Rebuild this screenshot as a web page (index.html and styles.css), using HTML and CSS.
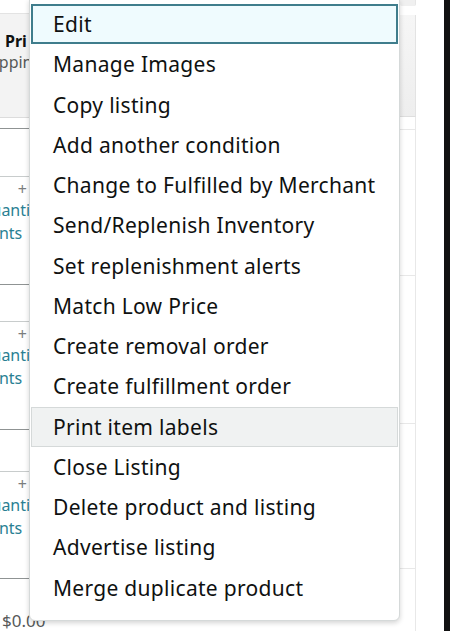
FILE: index.html
```html
<!DOCTYPE html>
<html lang="en">
<head>
<meta charset="utf-8">
<title>Listing actions</title>
<link rel="stylesheet" href="styles.css">
</head>
<body>
<div class="page">
  <div class="grid">
    <div class="col-main">
      <div class="top-gap"></div>
      <div class="head-cell">
        <div class="head-title">Pri</div>
        <div class="head-sub">Shipping</div>
      </div>
      <div class="gap-a"></div>
      <div class="field f1"></div>
      <div class="links l1">
        <div class="plus">+</div>
        <div class="link-a">Quanti</div>
        <div class="link-b">discounts</div>
      </div>
      <div class="field f2"></div>
      <div class="links l2">
        <div class="plus">+</div>
        <div class="link-a">Quanti</div>
        <div class="link-b">discounts</div>
      </div>
      <div class="field f3"></div>
      <div class="links l3">
        <div class="plus">+</div>
        <div class="link-a">Quanti</div>
        <div class="link-b">discounts</div>
      </div>
      <div class="field f4">
        <div class="price">$0.00</div>
      </div>
    </div>
    <div class="col-under"></div>
    <div class="col-side">
      <div class="side-stub"></div>
      <div class="side-head"></div>
      <div class="side-row r0"></div>
      <div class="side-row r1"></div>
      <div class="side-row r2"></div>
      <div class="side-row r3"></div>
      <div class="side-row r4"></div>
    </div>
    <div class="col-gutter"></div>
    <div class="scrollbar"></div>
  </div>

  <ul class="menu">
    <li class="item focused">Edit</li>
    <li class="item">Manage Images</li>
    <li class="item">Copy listing</li>
    <li class="item">Add another condition</li>
    <li class="item">Change to Fulfilled by Merchant</li>
    <li class="item">Send/Replenish Inventory</li>
    <li class="item">Set replenishment alerts</li>
    <li class="item">Match Low Price</li>
    <li class="item">Create removal order</li>
    <li class="item">Create fulfillment order</li>
    <li class="item hovered">Print item labels</li>
    <li class="item">Close Listing</li>
    <li class="item">Delete product and listing</li>
    <li class="item">Advertise listing</li>
    <li class="item">Merge duplicate product</li>
  </ul>
</div>
</body>
</html>
```

FILE: styles.css
```css
* { box-sizing: border-box; }

html, body {
  margin: 0;
  padding: 0;
  background: #ffffff;
}

body {
  font-family: "Noto Sans", "Open Sans", Arial, sans-serif;
  color: #0f1111;
  width: 450px;
  height: 631px;
  overflow: hidden;
}

.page {
  position: relative;
  width: 450px;
  height: 631px;
  overflow: hidden;
}

.grid {
  display: flex;
  height: 631px;
}

/* visible sliver of the main table column */
.col-main {
  width: 29px;
  flex: none;
  display: flex;
  flex-direction: column;
}

.col-under {
  width: 371px;
  flex: none;
}

.top-gap {
  height: 14px;
  flex: none;
  border-bottom: 1px solid #e3e3e3;
}

.head-cell {
  height: 104px;
  flex: none;
  overflow: hidden;
  background: #f3f3f3;
  border-bottom: 1px solid #dcdcdc;
  padding-top: 17px;
  white-space: nowrap;
}

.head-title {
  font-weight: 700;
  font-size: 16px;
  line-height: 21px;
  margin-left: 5px;
  color: #0f1111;
}

.head-sub {
  font-size: 16px;
  line-height: 21px;
  margin-left: -24px;
  color: #565959;
}

.gap-a {
  height: 10px;
  flex: none;
}

.field {
  flex: none;
  border-top: 1px solid #8f9393;
  border-bottom: 1px solid #c8cccc;
}

.f1 { height: 49px; }
.f2 { height: 38px; }
.f3 { height: 43px; }
.f4 { height: 60px; border-bottom: none; }

.links {
  flex: none;
  overflow: hidden;
  white-space: nowrap;
  font-size: 16px;
  line-height: 23px;
}

.l1 { height: 107px; padding-top: 2px; }
.l2 { height: 107px; padding-top: 2px; }
.l3 { height: 106px; padding-top: 2px; }

.plus {
  width: 27px;
  text-align: right;
  color: #7a7d7d;
  font-size: 16px;
  line-height: 20px;
}

.link-a {
  color: #2a7f93;
  margin-left: -21px;
}

.link-b {
  color: #2a7f93;
  margin-left: -50px;
}

.price {
  font-size: 17px;
  line-height: 20px;
  color: #565959;
  white-space: nowrap;
  margin-top: 32px;
  margin-left: 2px;
}

/* narrow side column */
.col-side {
  width: 16px;
  flex: none;
  display: flex;
  flex-direction: column;
}

.side-stub {
  height: 6px;
  flex: none;
  background: #f0f0f0;
  border-right: 1px solid #e6e6e6;
  border-radius: 0 0 2px 2px;
  margin-bottom: 9px;
}

.side-head {
  height: 102px;
  flex: none;
  background: linear-gradient(#f6f6f6, #eeeeee);
  border-right: 1px solid #e3e3e3;
  border-bottom: 1px solid #dedede;
}

.side-row {
  flex: none;
  border-right: 1px solid #e8e8e8;
  border-bottom: 1px solid #e8e8e8;
}

.r0 { height: 13px; }
.r1 { height: 146px; }
.r2 { height: 148px; }
.r3 { height: 145px; }
.r4 { flex: 1; border-bottom: none; }

.col-gutter {
  flex: 1;
  background: #ffffff;
}

.scrollbar {
  width: 6px;
  flex: none;
  background: #111112;
}

/* dropdown menu overlay */
.menu {
  position: absolute;
  left: 29px;
  top: -1px;
  width: 371px;
  margin: 0;
  padding: 4px 1px 12px;
  list-style: none;
  background: #ffffff;
  border: 1px solid #d5d9d9;
  border-radius: 0 0 6px 6px;
  box-shadow: 0 2px 5px rgba(15, 17, 17, 0.18);
}

.item {
  height: 40.25px;
  display: flex;
  align-items: center;
  padding-left: 22px;
  font-size: 21px;
  letter-spacing: 0.3px;
  color: #0f1111;
  white-space: nowrap;
}

.item.focused {
  border: 2px solid #3f7d8c;
  background: #effbfe;
  padding-left: 20px;
}

.item.hovered {
  border: 1px solid #d5d9d9;
  background: #f0f2f2;
  padding-left: 21px;
}
```
